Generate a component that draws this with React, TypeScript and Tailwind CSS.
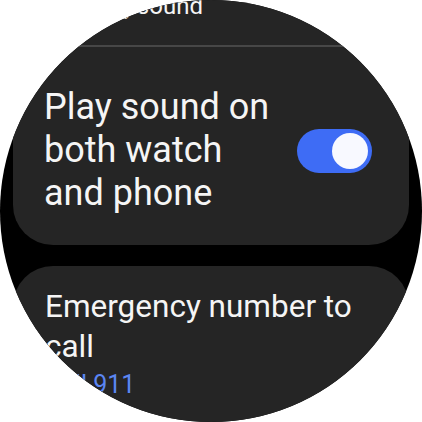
import React from "react";

const Toggle: React.FC<{ on: boolean }> = ({ on }) => {
  return (
    <div
      className={`flex h-[44px] w-[75px] shrink-0 items-center rounded-full px-[4px] ${
        on ? "justify-end bg-[#3e6cf5]" : "justify-start bg-[#5a5a5a]"
      }`}
    >
      <div className="h-[36px] w-[36px] rounded-full bg-[#f8f9ff]" />
    </div>
  );
};

const App: React.FC = () => {
  return (
    <div className="flex h-[422px] w-[422px] items-start justify-center bg-white">
      <div
        className="h-[422px] w-[422px] overflow-hidden rounded-full bg-black"
        style={{ fontFamily: "Roboto, 'Noto Sans', sans-serif" }}
      >
        <div className="-mt-[10px] flex flex-col gap-[21px] px-[13px]">
          <div className="rounded-b-[40px] bg-[#252525]">
            <div className="pb-[23px] pl-[30px] pr-[32px]">
              <p className="text-[24px] leading-[32px] text-[#f5f5f5]">
                Warning sound
              </p>
            </div>
            <div className="mx-[24px] h-[2px] bg-[#474747]" />
            <div className="flex items-center justify-between pb-[30px] pl-[31px] pr-[37px] pt-[39px]">
              <p className="text-[36px] leading-[43px] text-[#f5f5f5]">
                Play sound on
                <br />
                both watch
                <br />
                and phone
              </p>
              <Toggle on />
            </div>
          </div>

          <div className="rounded-[40px] bg-[#252525] pb-[40px] pl-[32px] pr-[26px] pt-[21px]">
            <p className="text-[31.5px] leading-[40px] text-[#f5f5f5]">
              Emergency number to call
            </p>
            <p className="mt-[2px] text-[25px] leading-[32px] text-[#5b86f3]">
              Call 911
            </p>
          </div>
        </div>
      </div>
    </div>
  );
};

export default App;
